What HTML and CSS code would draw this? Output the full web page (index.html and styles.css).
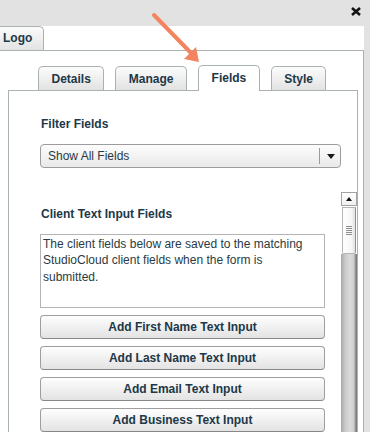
FILE: index.html
```html
<!DOCTYPE html>
<html>
<head>
<meta charset="utf-8">
<link rel="stylesheet" href="styles.css">
</head>
<body>
<div class="topbar">
  <svg class="close" width="10" height="9" viewBox="0 0 10 9"><path d="M1 1 L9 8 M9 1 L1 8" stroke="#141414" stroke-width="2.6" stroke-linecap="butt"/></svg>
</div>
<div class="sheet">
  <div class="logo-row"><div class="logo-tab">Logo</div></div>
  <div class="frame">
    <div class="tabs">
      <div class="tab">Details</div>
      <div class="tab">Manage</div>
      <div class="tab active">Fields</div>
      <div class="tab">Style</div>
    </div>
    <div class="panel">
      <div class="filter">
        <div class="label">Filter Fields</div>
        <div class="select">
          <span class="sel-text">Show All Fields</span>
          <span class="sel-btn"><span class="sel-arrow"></span></span>
        </div>
      </div>
      <div class="scroller">
        <div class="scroll-content">
          <div class="label">Client Text Input Fields</div>
          <div class="note">The client fields below are saved to the matching StudioCloud client fields when the form is submitted.</div>
          <div class="btn">Add First Name Text Input</div>
          <div class="btn">Add Last Name Text Input</div>
          <div class="btn">Add Email Text Input</div>
          <div class="btn">Add Business Text Input</div>
        </div>
        <div class="scrollbar">
          <div class="sb-up"><span class="sb-tri"></span></div>
          <div class="sb-thumb"><span class="grip"></span></div>
          <div class="sb-track"></div>
        </div>
      </div>
    </div>
  </div>
</div>
<svg class="pointer" width="60" height="70" viewBox="140 0 60 70">
  <line x1="154" y1="15" x2="191" y2="53" stroke="#f2855f" stroke-width="4" stroke-linecap="round"/>
  <polygon points="184,59 196,47 199,62" fill="#f2855f"/>
</svg>
</body>
</html>
```
FILE: styles.css
```css
html, body {
  margin: 0;
  padding: 0;
}
body {
  width: 370px;
  height: 432px;
  overflow: hidden;
  background: #e2e2e2;
  font-family: "Liberation Sans", Arial, sans-serif;
  font-size: 12px;
  color: #203848;
  position: relative;
}
.topbar {
  height: 26px;
  display: flex;
  justify-content: flex-end;
  align-items: flex-start;
  padding-right: 9px;
  box-sizing: border-box;
}
.close {
  display: block;
  margin-top: 7px;
}
.sheet {
  width: 364px;
  height: 406px;
  background: #fff;
  overflow: hidden;
}
.logo-row {
  height: 24px;
  display: flex;
}
.logo-tab {
  margin-left: -9px;
  padding: 0 11px;
  height: 24px;
  box-sizing: border-box;
  border: 1px solid #a9b1b1;
  border-bottom: none;
  border-radius: 0 5px 0 0;
  background: linear-gradient(#fbfbfb, #e3e3e3);
  font-weight: bold;
  line-height: 23px;
}
.frame {
  border-top: 1px solid #a9b1b1;
  border-right: 1px solid #a9b1b1;
  padding: 15px 5px 0 8px;
  height: 400px;
}
.tabs {
  display: flex;
  align-items: flex-start;
  gap: 11px;
  padding-left: 30px;
  margin-bottom: -1px;
}
.tab {
  height: 24px;
  box-sizing: border-box;
  padding: 0 12.5px;
  border: 1px solid #a9b1b1;
  border-bottom: none;
  border-radius: 5px 5px 0 0;
  background: linear-gradient(#fcfcfc, #e2e2e2);
  font-weight: bold;
  line-height: 24px;
}
.tab.active {
  height: 26px;
  margin-top: -1px;
  background: #fff;
  line-height: 25px;
  position: relative;
  z-index: 1;
}
.panel {
  width: 350px;
  box-sizing: border-box;
  height: 360px;
  border: 1px solid #a9b1b1;
  border-bottom: none;
}
.label {
  font-weight: bold;
  line-height: 14px;
  padding-left: 1px;
}
.filter {
  padding: 26px 16px 0 31px;
  height: 101px;
  box-sizing: border-box;
}
.select {
  margin-top: 13px;
  height: 24px;
  box-sizing: border-box;
  border: 1px solid #9c9c9c;
  border-radius: 4px;
  background: linear-gradient(#fdfdfd, #e9e9e9);
  display: flex;
  align-items: center;
}
.sel-text {
  flex: 1;
  padding-left: 7px;
  color: #2a3a44;
}
.sel-btn {
  width: 20px;
  height: 16px;
  border-left: 1px solid #9a9a9a;
  display: flex;
  align-items: center;
  justify-content: center;
}
.sel-arrow {
  width: 0;
  height: 0;
  border-left: 4px solid transparent;
  border-right: 4px solid transparent;
  border-top: 5px solid #1a1a1a;
  margin-left: 1px;
}
.scroller {
  display: flex;
  height: 240px;
}
.scroll-content {
  flex: 1;
  padding: 15px 16px 0 31px;
  overflow: hidden;
}
.note {
  margin-top: 13px;
  height: 74px;
  box-sizing: border-box;
  width: 285px;
  border: 1px solid #b3b3b3;
  padding: 1px 14px 0 2px;
  line-height: 16.4px;
  color: #2a3a44;
}
.btn {
  margin-top: 7px;
  width: 285px;
  height: 24px;
  box-sizing: border-box;
  border: 1px solid #9e9e9e;
  border-bottom-color: #888;
  border-radius: 4px;
  background: linear-gradient(#fefefe, #e3e3e3);
  font-weight: bold;
  text-align: center;
  line-height: 22px;
}
.scrollbar {
  width: 16px;
  display: flex;
  flex-direction: column;
}
.sb-up {
  height: 14px;
  box-sizing: border-box;
  border: 1px solid #a3a3a3;
  background: linear-gradient(#ffffff, #f0f0f0);
  display: flex;
  align-items: center;
  justify-content: center;
}
.sb-tri {
  width: 0;
  height: 0;
  border-left: 3.5px solid transparent;
  border-right: 3.5px solid transparent;
  border-bottom: 4px solid #111;
}
.sb-thumb {
  margin: 1px 1px 0 1px;
  height: 47px;
  box-sizing: border-box;
  border: 1px solid #b5b5b5;
  border-right-color: #8c8c8c;
  border-radius: 0 0 2px 2px;
  background: linear-gradient(to right, #ffffff, #f6f6f6 70%, #e2e2e2);
  display: flex;
  align-items: center;
  justify-content: center;
}
.grip {
  width: 6px;
  height: 9px;
  background: repeating-linear-gradient(#8e8e8e 0 1px, transparent 1px 2px);
  margin-left: -1px;
}
.sb-track {
  flex: 1;
  background: linear-gradient(to right, #a9a9a9, #c9c9c9 25%, #dadada 55%, #cfcfcf 80%, #8a8a8a 92%, #767676);
}
.pointer {
  position: absolute;
  left: 140px;
  top: 0;
}
```
